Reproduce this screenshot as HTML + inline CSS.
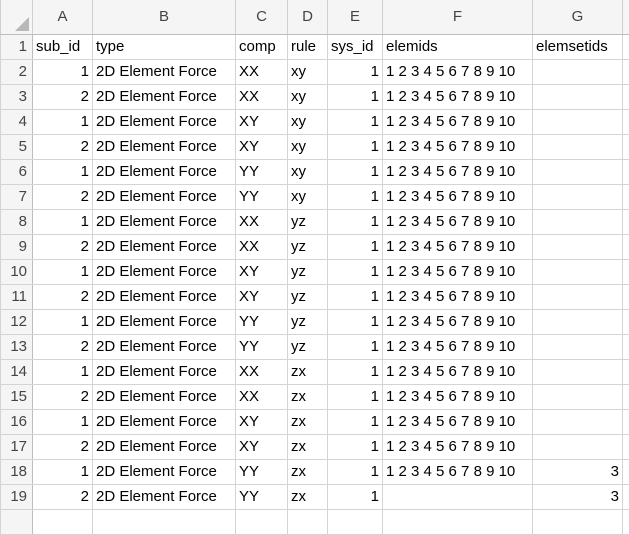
<!DOCTYPE html>
<html><head><style>
body{margin:0;width:629px;height:518px;overflow:hidden;background:#fff;font-family:"Liberation Sans",sans-serif;font-size:15px;color:#000}
table{border-collapse:collapse;table-layout:fixed;position:absolute;left:0;top:0;width:642px}
td{border:1px solid #d4d4d4;height:24px;padding:0 3px;white-space:nowrap;overflow:hidden;line-height:24px;box-sizing:border-box}
tr.h td{height:34px;background:#f5f5f5;text-align:center;color:#444;border-color:#d0d0d0;border-bottom:1px solid #bdbdbd;border-top:none}
td.rh{background:#f5f5f5;text-align:right;color:#444;padding-right:5px;border-right:1px solid #bdbdbd}
.r{text-align:right}
tr{height:25px}
tr.h{height:34px}
</style></head><body>
<table>
<colgroup><col style="width:32px"><col style="width:60px"><col style="width:143px"><col style="width:52px"><col style="width:40px"><col style="width:55px"><col style="width:150px"><col style="width:90px"><col style="width:20px"></colgroup>
<tr class="h"><td style="position:relative"><div style="position:absolute;right:3px;bottom:3px;width:0;height:0;border-left:14px solid transparent;border-bottom:14px solid #b8b8b8"></div></td><td>A</td><td>B</td><td>C</td><td>D</td><td>E</td><td>F</td><td>G</td><td></td></tr>
<tr><td class="rh">1</td><td>sub_id</td><td>type</td><td>comp</td><td>rule</td><td>sys_id</td><td>elemids</td><td>elemsetids</td><td></td></tr>
<tr><td class="rh">2</td><td class="r">1</td><td>2D Element Force</td><td>XX</td><td>xy</td><td class="r">1</td><td>1 2 3 4 5 6 7 8 9 10</td><td></td><td></td></tr>
<tr><td class="rh">3</td><td class="r">2</td><td>2D Element Force</td><td>XX</td><td>xy</td><td class="r">1</td><td>1 2 3 4 5 6 7 8 9 10</td><td></td><td></td></tr>
<tr><td class="rh">4</td><td class="r">1</td><td>2D Element Force</td><td>XY</td><td>xy</td><td class="r">1</td><td>1 2 3 4 5 6 7 8 9 10</td><td></td><td></td></tr>
<tr><td class="rh">5</td><td class="r">2</td><td>2D Element Force</td><td>XY</td><td>xy</td><td class="r">1</td><td>1 2 3 4 5 6 7 8 9 10</td><td></td><td></td></tr>
<tr><td class="rh">6</td><td class="r">1</td><td>2D Element Force</td><td>YY</td><td>xy</td><td class="r">1</td><td>1 2 3 4 5 6 7 8 9 10</td><td></td><td></td></tr>
<tr><td class="rh">7</td><td class="r">2</td><td>2D Element Force</td><td>YY</td><td>xy</td><td class="r">1</td><td>1 2 3 4 5 6 7 8 9 10</td><td></td><td></td></tr>
<tr><td class="rh">8</td><td class="r">1</td><td>2D Element Force</td><td>XX</td><td>yz</td><td class="r">1</td><td>1 2 3 4 5 6 7 8 9 10</td><td></td><td></td></tr>
<tr><td class="rh">9</td><td class="r">2</td><td>2D Element Force</td><td>XX</td><td>yz</td><td class="r">1</td><td>1 2 3 4 5 6 7 8 9 10</td><td></td><td></td></tr>
<tr><td class="rh">10</td><td class="r">1</td><td>2D Element Force</td><td>XY</td><td>yz</td><td class="r">1</td><td>1 2 3 4 5 6 7 8 9 10</td><td></td><td></td></tr>
<tr><td class="rh">11</td><td class="r">2</td><td>2D Element Force</td><td>XY</td><td>yz</td><td class="r">1</td><td>1 2 3 4 5 6 7 8 9 10</td><td></td><td></td></tr>
<tr><td class="rh">12</td><td class="r">1</td><td>2D Element Force</td><td>YY</td><td>yz</td><td class="r">1</td><td>1 2 3 4 5 6 7 8 9 10</td><td></td><td></td></tr>
<tr><td class="rh">13</td><td class="r">2</td><td>2D Element Force</td><td>YY</td><td>yz</td><td class="r">1</td><td>1 2 3 4 5 6 7 8 9 10</td><td></td><td></td></tr>
<tr><td class="rh">14</td><td class="r">1</td><td>2D Element Force</td><td>XX</td><td>zx</td><td class="r">1</td><td>1 2 3 4 5 6 7 8 9 10</td><td></td><td></td></tr>
<tr><td class="rh">15</td><td class="r">2</td><td>2D Element Force</td><td>XX</td><td>zx</td><td class="r">1</td><td>1 2 3 4 5 6 7 8 9 10</td><td></td><td></td></tr>
<tr><td class="rh">16</td><td class="r">1</td><td>2D Element Force</td><td>XY</td><td>zx</td><td class="r">1</td><td>1 2 3 4 5 6 7 8 9 10</td><td></td><td></td></tr>
<tr><td class="rh">17</td><td class="r">2</td><td>2D Element Force</td><td>XY</td><td>zx</td><td class="r">1</td><td>1 2 3 4 5 6 7 8 9 10</td><td></td><td></td></tr>
<tr><td class="rh">18</td><td class="r">1</td><td>2D Element Force</td><td>YY</td><td>zx</td><td class="r">1</td><td>1 2 3 4 5 6 7 8 9 10</td><td class="r">3</td><td></td></tr>
<tr><td class="rh">19</td><td class="r">2</td><td>2D Element Force</td><td>YY</td><td>zx</td><td class="r">1</td><td></td><td class="r">3</td><td></td></tr>
<tr><td class="rh"></td><td></td><td></td><td></td><td></td><td></td><td></td><td></td><td></td></tr>
</table>
</body></html>
